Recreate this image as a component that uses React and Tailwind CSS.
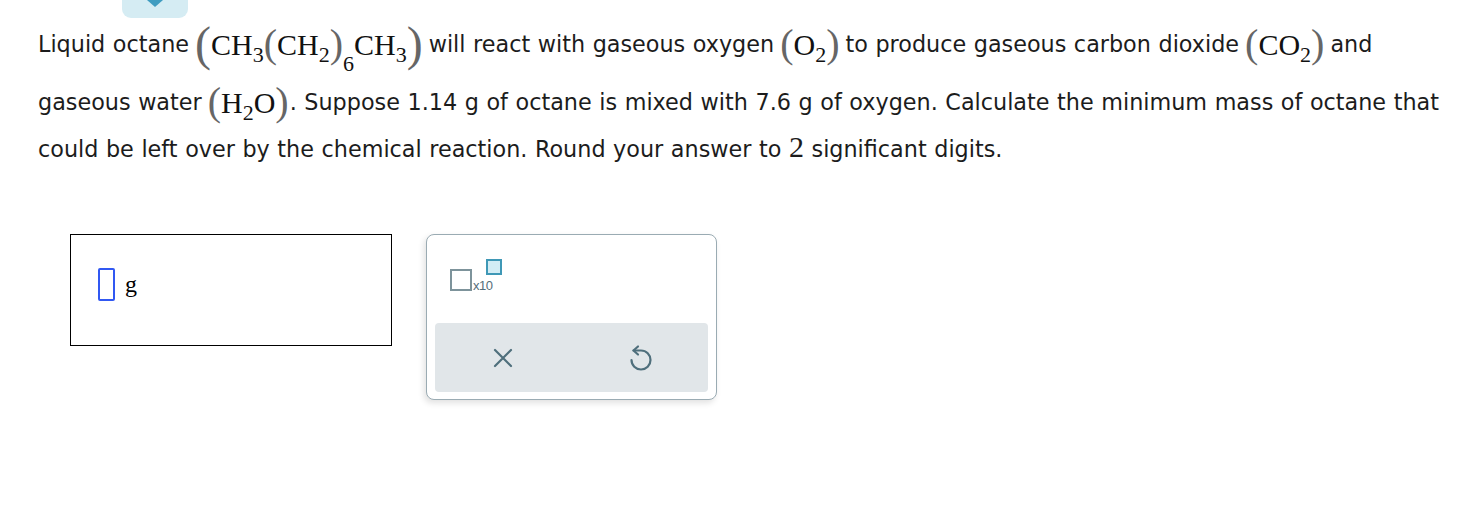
import React from 'react';

const sans = "font-['DejaVu_Sans','Verdana',sans-serif]";
const serif = "font-['Liberation_Serif','Times_New_Roman',serif]";

const Paren = ({ side, big }) => (
    <span
        className={`${serif} ${big ? 'text-[48px] align-[-5px]' : 'text-[40px] align-[-2px]'} leading-[0] text-[#666]`}
    >
        {side === 'l' ? '(' : ')'}
    </span>
);

const Sub = ({ children, low }) => (
    <span className={`${low ? 'align-[-16px]' : 'align-[-7px]'} text-[22px] leading-[0]`}>{children}</span>
);

const Math = ({ children }) => (
    <span className={`${serif} mx-[6px] align-[-3px] text-[30px] leading-[0] text-[#111] [word-spacing:0]`}>{children}</span>
);

export default function App() {
    return (
        <div className={`min-h-screen bg-white ${sans} text-[#1c1c1c]`}>
            <div className="ml-[122px] flex h-[18px] w-[66px] justify-center rounded-b-[9px] bg-[#d5ecf3]">
                <svg width="16" height="8" viewBox="0 0 16 8">
                    <polygon points="0,0 16,0 8,7" fill="#3f9cc0" />
                </svg>
            </div>

            <div className="pl-[38px] pt-[2px] text-[22.3px] [word-spacing:0.5px] whitespace-nowrap">
                <div className="h-[58px] leading-[48px]">
                    Liquid octane
                    <Math>
                        <Paren side="l" big />
                        CH<Sub>3</Sub>
                        <Paren side="l" />
                        CH<Sub>2</Sub>
                        <Paren side="r" />
                        <Sub low>6</Sub>
                        CH<Sub>3</Sub>
                        <Paren side="r" big />
                    </Math>
                    will react with gaseous oxygen
                    <Math>
                        <Paren side="l" />O<Sub>2</Sub><Paren side="r" />
                    </Math>
                    to produce gaseous carbon dioxide
                    <Math>
                        <Paren side="l" />CO<Sub>2</Sub><Paren side="r" />
                    </Math>
                    and
                </div>
                <div className="h-[47px] leading-[48px]">
                    gaseous water
                    <Math>
                        <Paren side="l" />H<Sub>2</Sub>O<Paren side="r" />
                    </Math>
                    <span className="-ml-[5px]">. Suppose 1.14 g of octane is mixed with 7.6 g of oxygen. Calculate the minimum mass of octane that</span>
                </div>
                <div className="h-[48px] leading-[48px]">
                    could be left over by the chemical reaction. Round your answer to{' '}
                    <span className={`${serif} text-[30px] leading-[0]`}>2</span> significant digits.
                </div>
            </div>

            <div className="mt-[61px] ml-[70px] flex items-start gap-[34px]">
                <div className="flex h-[112px] w-[322px] items-center border border-black pl-[27px]">
                    <div className="mb-[12px] flex items-center gap-[10px]">
                        <div className="h-[33px] w-[17px] rounded-[2px] border-2 border-[#3158f2]" />
                        <span className={`${serif} text-[24px] text-black`}>g</span>
                    </div>
                </div>

                <div className="flex h-[166px] w-[291px] flex-col rounded-[8px] border border-[#9aabb3] bg-white shadow-[-2px_3px_6px_rgba(0,0,0,0.12)]">
                    <div className="h-[88px] pl-[23px] pt-[24px]">
                        <div className="flex items-start">
                            <div className="mt-[10px] h-[22px] w-[22px] border-2 border-[#7d939b]" />
                            <span className="mt-[19px] ml-[1px] font-['Liberation_Sans',Arial,sans-serif] text-[13px] leading-[16px] tracking-[-0.5px] text-[#546e7a]">
                                x10
                            </span>
                            <div className="-ml-[6px] h-[16px] w-[16px] border-2 border-[#3f98b6] bg-[#d3edf5]" />
                        </div>
                    </div>
                    <div className="mx-[8px] flex h-[69px] rounded-[4px] bg-[#e1e6e9]">
                        <button className="flex flex-1 items-center justify-center">
                            <svg width="20" height="20" viewBox="0 0 20 20" fill="none" stroke="#4f6f7c" strokeWidth="2.2" strokeLinecap="round">
                                <path d="M2 2 L18 18 M18 2 L2 18" />
                            </svg>
                        </button>
                        <button className="flex flex-1 items-center justify-center">
                            <svg width="24" height="28" viewBox="0 0 24 28" fill="none" stroke="#4f6f7c" strokeWidth="2.2" strokeLinecap="round" strokeLinejoin="round">
                                <path d="M5.5 6.5 H13 A9.5 9.5 0 1 1 3.5 16" />
                                <path d="M10 2.5 L5.5 6.5 L10 10.5" />
                            </svg>
                        </button>
                    </div>
                </div>
            </div>
        </div>
    );
}
